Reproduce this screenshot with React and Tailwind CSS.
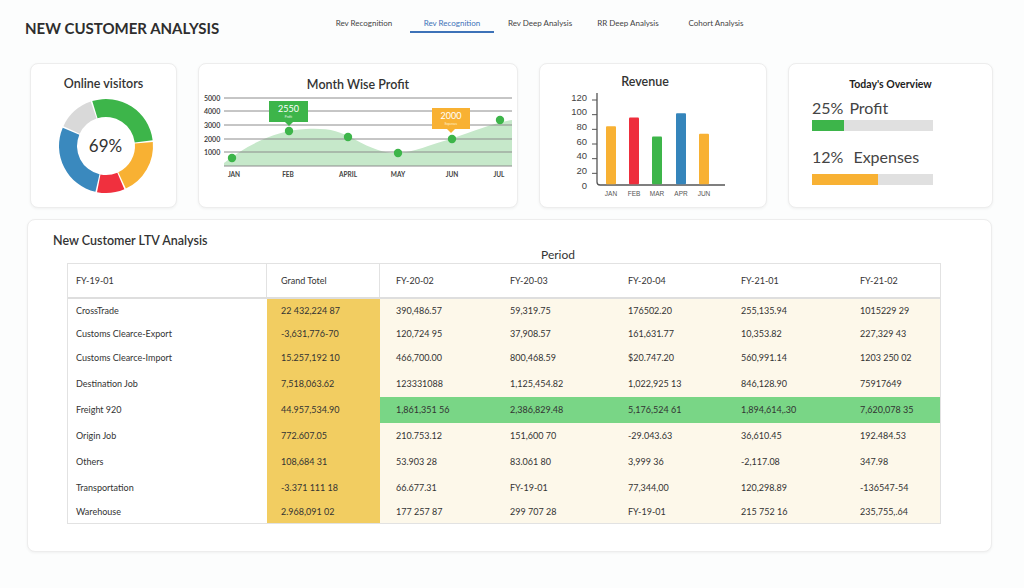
import React from "react";

const tabs = ["Rev Recognition", "Rev Recognition", "Rev Deep Analysis", "RR Deep Analysis", "Cohort Analysis"];

const rows = [
  ["CrossTrade", "22 432,224 87", "390,486.57", "59,319.75", "176502.20", "255,135.94", "1015229 29"],
  ["Customs Clearce-Export", "-3,631,776-70", "120,724 95", "37,908.57", "161,631.77", "10,353.82", "227,329 43"],
  ["Customs Clearce-Import", "15.257,192 10", "466,700.00", "800,468.59", "$20.747.20", "560,991.14", "1203 250 02"],
  ["Destination Job", "7,518,063.62", "123331088", "1,125,454.82", "1,022,925 13", "846,128.90", "75917649"],
  ["Freight 920", "44.957,534.90", "1,861,351 56", "2,386,829.48", "5,176,524 61", "1,894,614,.30", "7,620,078 35"],
  ["Origin Job", "772.607.05", "210.753.12", "151,600 70", "-29.043.63", "36,610.45", "192.484.53"],
  ["Others", "108,684 31", "53.903 28", "83.061 80", "3,999 36", "-2,117.08", "347.98"],
  ["Transportation", "-3.371 111 18", "66.677.31", "FY-19-01", "77,344,00", "120,298.89", "-136547-54"],
  ["Warehouse", "2.968,091 02", "177 257 87", "299 707 28", "FY-19-01", "215 752 16", "235,755,.64"],
];

const rowHeights = ["h-[24px]", "h-[22px]", "h-[26px]", "h-[26px]", "h-[26px]", "h-[26px]", "h-[26px]", "h-[26px]", "h-[22px]"];
const periodWidths = ["w-[114px]", "w-[118px]", "w-[113px]", "w-[119px]", "w-[96px]"];
const periods = ["FY-20-02", "FY-20-03", "FY-20-04", "FY-21-01", "FY-21-02"];

// donut slice, angles clockwise from 12 o'clock
function arc(cx, cy, ro, ri, a0, a1) {
  const p = (r, a) => {
    const t = ((a - 90) * Math.PI) / 180;
    return `${(cx + r * Math.cos(t)).toFixed(2)},${(cy + r * Math.sin(t)).toFixed(2)}`;
  };
  const big = a1 - a0 > 180 ? 1 : 0;
  return `M${p(ro, a0)} A${ro},${ro} 0 ${big} 1 ${p(ro, a1)} L${p(ri, a1)} A${ri},${ri} 0 ${big} 0 ${p(ri, a0)} Z`;
}

function Donut() {
  const slices = [
    [-17, 83, "#3db54a"],
    [85, 155, "#f8b133"],
    [157, 191, "#f0303e"],
    [193, 293, "#3a89be"],
    [295, 341, "#d9d9d9"],
  ];
  return (
    <div className="relative mx-auto mt-[4px] h-[100px] w-[100px] translate-x-[2px]">
      <svg width="100" height="100" viewBox="0 0 100 100">
        {slices.map(([a, b, c], i) => (
          <path key={i} d={arc(50, 50, 47, 29, a, b)} fill={c} />
        ))}
      </svg>
      <div className="absolute inset-0 flex items-center justify-center text-[17px] text-[#333]">69%</div>
    </div>
  );
}

function ProfitChart() {
  const grid = [
    ["5000", 5],
    ["4000", 18],
    ["3000", 32],
    ["2000", 46],
    ["1000", 59],
  ];
  const months = [
    ["JAN", 35],
    ["FEB", 89],
    ["APRIL", 149],
    ["MAY", 199],
    ["JUN", 253],
    ["JUL", 300],
  ];
  const pts = [
    [33, 65],
    [90, 38],
    [149, 44],
    [199, 60],
    [253, 46],
    [301, 27],
  ];
  return (
    <svg width="320" height="110" viewBox="0 0 320 110">
      <path
        d="M25,73 L25,70 C50,50 80,37 107,36 C130,35 140,38 155,46 C175,57 188,61 200,60 C215,59 230,52 252,46 C275,38 295,30 313,27 L313,73 Z"
        fill="#c6e8ca"
      />
      {grid.map(([t, y]) => (
        <g key={t}>
          <line x1="25" x2="313" y1={y} y2={y} stroke="#8c8c8c" strokeWidth="1" />
          <text x="5" y={y + 2.5} fontSize="7" fill="#333" fontWeight="600">
            {t}
          </text>
        </g>
      ))}
      <line x1="25" x2="313" y1="73" y2="73" stroke="#8c8c8c" strokeWidth="1" />
      {months.map(([m, x]) => (
        <text key={m} x={x} y="84" fontSize="6.5" fill="#444" fontWeight="700" textAnchor="middle">
          {m}
        </text>
      ))}
      {pts.map(([x, y], i) => (
        <circle key={i} cx={x} cy={y} r="4.2" fill="#3db54a" />
      ))}
      <rect x="70" y="8" width="39" height="21" fill="#3db54a" />
      <path d="M86,29 L94,29 L90,33 Z" fill="#3db54a" />
      <text x="89.5" y="19" fontSize="9" fill="#fff" textAnchor="middle">
        2550
      </text>
      <text x="89.5" y="25" fontSize="3" fill="#e8f6e9" textAnchor="middle">
        Profit
      </text>
      <rect x="233" y="15" width="38" height="21" fill="#f8b133" />
      <path d="M248,36 L256,36 L252,40 Z" fill="#f8b133" />
      <text x="252" y="26" fontSize="9" fill="#fff" textAnchor="middle">
        2000
      </text>
      <text x="252" y="32" fontSize="3" fill="#fff3dc" textAnchor="middle">
        Expenses
      </text>
    </svg>
  );
}

function RevenueChart() {
  const ticks = [120, 100, 80, 60, 40, 20, 0];
  const y = (v) => 96 - (v * 88) / 120;
  const bars = [
    ["JAN", 80, 66, "#f8b133"],
    ["FEB", 92, 89, "#ee2e3c"],
    ["MAR", 66, 112, "#3db54a"],
    ["APR", 98, 136, "#3585bb"],
    ["JUN", 70, 159, "#f8b133"],
  ];
  return (
    <svg width="228" height="112" viewBox="0 0 228 112" style={{ fontFamily: '"Liberation Sans", Arial, sans-serif' }}>
      {ticks.map((t) => (
        <g key={t}>
          <text x="47" y={y(t) + 3.5} fontSize="9.5" fill="#444" textAnchor="end">
            {t}
          </text>
          {t > 0 && <line x1="52" x2="57" y1={y(t) + 3} y2={y(t) + 3} stroke="#555" strokeWidth="1" />}
        </g>
      ))}
      <path d="M57,4 L57,93 Q57,96 60,96 L185,96" fill="none" stroke="#555" strokeWidth="1.3" />
      {bars.map(([m, v, x, c]) => (
        <g key={m}>
          <rect x={x} y={y(v)} width="10" height={96 - y(v) - 0.7} rx="1" fill={c} />
          <text x={x + 5} y="107" fontSize="6.5" fill="#555" textAnchor="middle">
            {m}
          </text>
        </g>
      ))}
    </svg>
  );
}

function Card({ className, children }) {
  return (
    <div className={`rounded-lg border border-[#ededed] bg-white shadow-[0_1px_3px_rgba(0,0,0,0.05)] ${className}`}>
      {children}
    </div>
  );
}

export default function App() {
  return (
    <div
      className="h-[588px] w-[1024px] overflow-hidden bg-[#fcfdfd] text-[#333]"
      style={{ fontFamily: 'Lato, "Open Sans", sans-serif' }}
    >
      {/* header */}
      <div className="flex h-[63px] items-start pl-[25px] pt-[17px]">
        <div className="w-[297px] text-[15px] font-bold leading-[22px] text-[#2e2e2e]">NEW CUSTOMER ANALYSIS</div>
        <div className="flex gap-[4px]">
          {tabs.map((t, i) => (
            <div
              key={i}
              className={
                i === 1
                  ? "w-[84px] border-b-2 border-[#3d72b8] pb-[2px] text-center text-[8px] leading-[12px] text-[#3d72b8]"
                  : "w-[84px] border-b-2 border-transparent pb-[2px] text-center text-[8px] leading-[12px] text-[#444]"
              }
            >
              {t}
            </div>
          ))}
        </div>
      </div>

      {/* top cards */}
      <div className="flex gap-[21px] pl-[30px]">
        <Card className="h-[145px] w-[147px]">
          <div className="pt-[12px] text-center text-[12.5px] font-semibold leading-[16px] text-[#333]">Online visitors</div>
          <Donut />
        </Card>
        <Card className="h-[145px] w-[320px]">
          <div className="pt-[13px] text-center text-[12.5px] font-semibold leading-[16px] text-[#333]">Month Wise Profit</div>
          <ProfitChart />
        </Card>
        <Card className="h-[145px] w-[228px]">
          <div className="pr-[16px] pt-[11px] text-center text-[12.5px] font-semibold leading-[14px] text-[#333]">Revenue</div>
          <RevenueChart />
        </Card>
        <Card className="h-[145px] w-[205px]">
          <div className="pt-[14px] text-center text-[10.5px] font-bold leading-[12px] text-[#222]">Today's Overview</div>
          <div className="pl-[23px]">
            <div className="mt-[8px] text-[16px] leading-[20px] text-[#444]">
              25%<span className="ml-[6px]">Profit</span>
            </div>
            <div className="mt-[2px] h-[11px] w-[121px] bg-[#e0e0e0]">
              <div className="h-full w-[32px] bg-[#3db54a]" />
            </div>
            <div className="mt-[16px] text-[16px] leading-[20px] text-[#444]">
              12%<span className="ml-[10px]">Expenses</span>
            </div>
            <div className="mt-[7px] h-[11px] w-[121px] bg-[#e0e0e0]">
              <div className="h-full w-[66px] bg-[#f8b133]" />
            </div>
          </div>
        </Card>
      </div>

      {/* LTV table card */}
      <Card className="ml-[27px] mt-[11px] h-[333px] w-[965px] pl-[25px] pt-[13px]">
        <div className="text-[12.5px] font-semibold leading-[16px] text-[#333]">New Customer LTV Analysis</div>
        <div className="-mt-[1px] ml-[488px] text-[12px] leading-[14px] text-[#333]">Period</div>
        <div className="ml-[14px] mt-[1px] w-[874px] border border-[#e2e2e2] text-[9px] text-[#333]">
          <div className="flex h-[35px] items-center border-b-2 border-[#dedede] bg-white">
            <div className="flex h-full w-[199px] items-center border-r border-[#e2e2e2] pl-[8px]">FY-19-01</div>
            <div className="flex h-full w-[113px] items-center border-r border-[#e2e2e2] pl-[14px]">Grand Totel</div>
            {periods.map((p, i) => (
              <div key={p} className={`${periodWidths[i]} pl-[16px]`}>
                {p}
              </div>
            ))}
          </div>
          {rows.map((r, ri) => (
            <div key={r[0]} className={`flex ${rowHeights[ri]}`}>
              <div className="flex w-[199px] items-center bg-white pl-[8px]">{r[0]}</div>
              <div className="flex w-[113px] items-center bg-[#f2cd61] pl-[14px]">{r[1]}</div>
              {r.slice(2).map((v, ci) => (
                <div
                  key={ci}
                  className={`flex ${periodWidths[ci]} items-center pl-[16px] ${ri === 4 ? "bg-[#79d686]" : "bg-[#fdf8ea]"}`}
                >
                  {v}
                </div>
              ))}
            </div>
          ))}
        </div>
      </Card>
    </div>
  );
}
